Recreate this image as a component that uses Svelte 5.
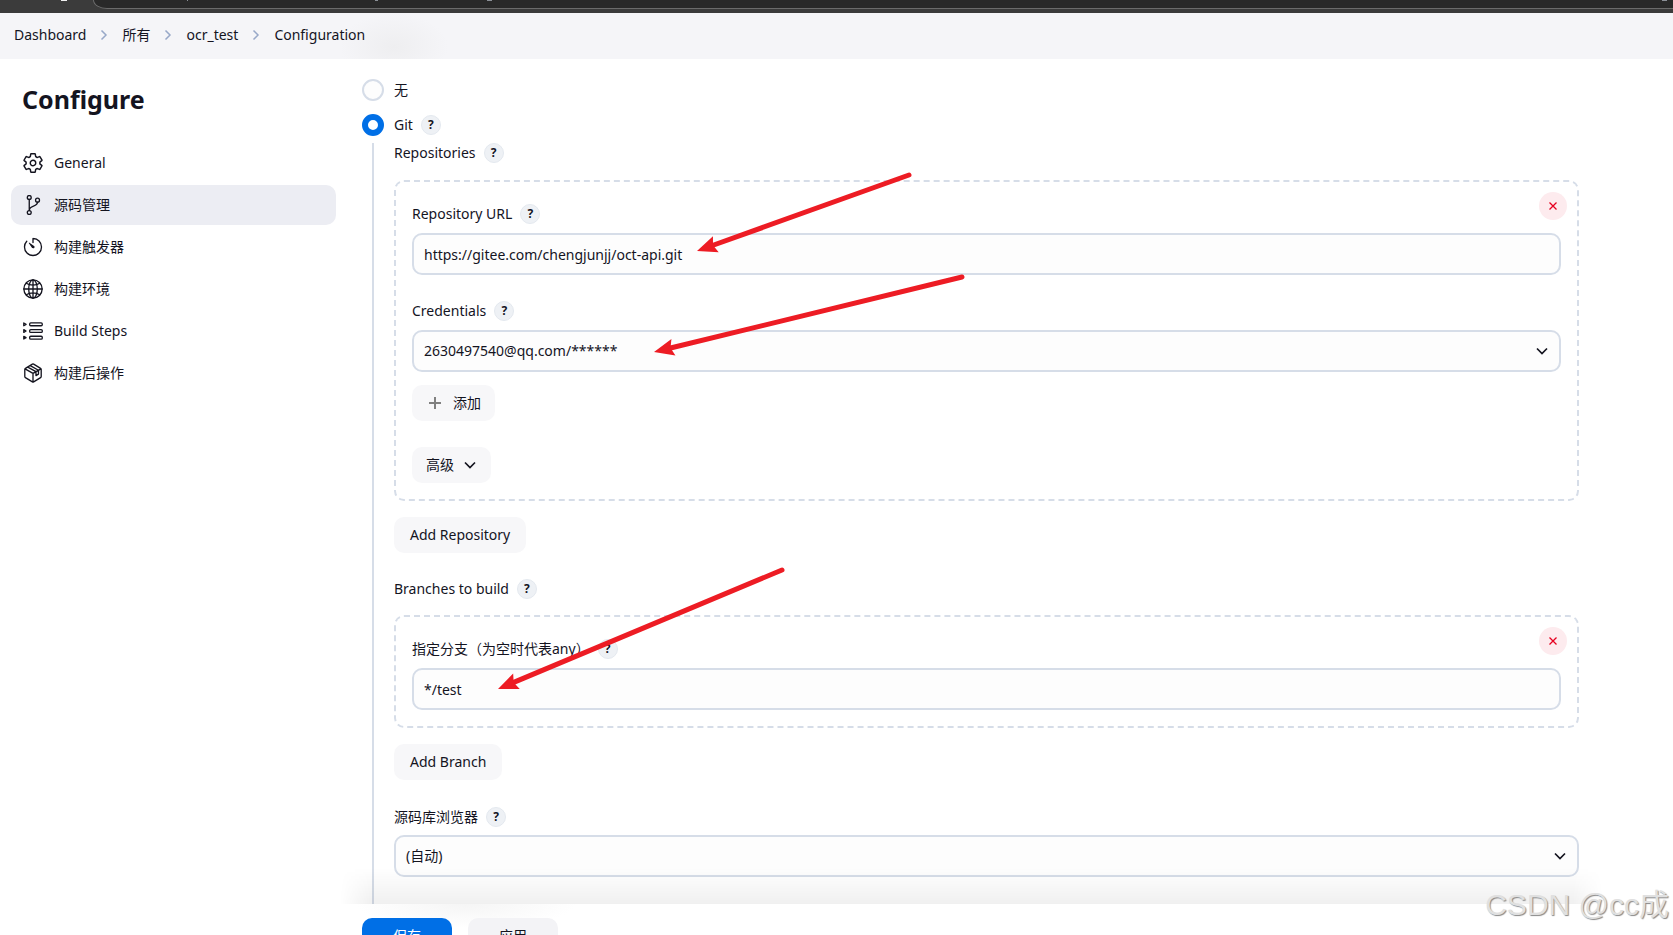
<script>
	let scm = $state('git')
	let repoUrl = $state('https://gitee.com/chengjunjj/oct-api.git')
	let credentials = $state('2630497540@qq.com/******')
	let branch = $state('*/test')
	let browser = $state('(自动)')
	let section = $state('scm')

	const crumbs = ['Dashboard', '所有', 'ocr_test', 'Configuration']

	const sections = [
		{id: 'general', label: 'General'},
		{id: 'scm', label: '源码管理'},
		{id: 'triggers', label: '构建触发器'},
		{id: 'environment', label: '构建环境'},
		{id: 'steps', label: 'Build Steps'},
		{id: 'post', label: '构建后操作'}
	]

	// from = tail, to = tip
	const arrows = [
		{from: [909, 175], to: [697, 251]},
		{from: [962, 277], to: [654, 352]},
		{from: [782, 570], to: [498, 689]}
	].map(({from, to}) => {
		const dx = from[0] - to[0]
		const dy = from[1] - to[1]
		return {
			x: to[0],
			y: to[1],
			length: Math.hypot(dx, dy),
			angle: Math.atan2(dy, dx) * 180 / Math.PI
		}
	})
</script>

{#snippet help(name)}
	<button type="button" class="help" aria-label={`Help for ${name}`}>?</button>
{/snippet}

{#snippet chevron()}
	<svg class="chevron" viewBox="0 0 14 14" aria-hidden="true"><path d="M2 4.5l5 5 5-5" /></svg>
{/snippet}

{#snippet remove()}
	<button type="button" class="remove" aria-label="Delete">
		<svg viewBox="0 0 10 10" aria-hidden="true"><path d="M1.5 1.5l7 7M8.5 1.5l-7 7" /></svg>
	</button>
{/snippet}

<div class="page">
	<div class="browser-bar">
		<div class="address"></div>
		<svg class="tab-text" aria-hidden="true">
			<path class="bright" d="M61 0h6" />
			<path d="M187 0h1M375 0h3M487 0h5M1662 0h5" />
		</svg>
	</div>

	<header>
		<nav class="crumbs" aria-label="Breadcrumb">
			{#each crumbs as crumb, i}
				{#if i > 0}
					<svg viewBox="0 0 8 12" aria-hidden="true"><path d="M1.5 1.5L6 6l-4.5 4.5" /></svg>
				{/if}
				<a href="#top">{crumb}</a>
			{/each}
		</nav>
	</header>

	<div class="body">
		<aside>
			<h1>Configure</h1>
			<nav class="tasks">
				{#each sections as item}
					<a href={`#${item.id}`} class:active={section === item.id} onclick={() => section = item.id}>
						<svg viewBox="0 0 512 512" aria-hidden="true">
							{#if item.id === 'general'}
								<g transform="translate(256 256) scale(1.1) translate(-256 -256)">
									<path d="M262.29 192.31a64 64 0 1057.4 57.4 64.13 64.13 0 00-57.4-57.4zM416.39 256a154.34 154.34 0 01-1.53 20.79l45.21 35.46a10.81 10.81 0 012.45 13.75l-42.77 74a10.81 10.81 0 01-13.14 4.59l-44.9-18.08a16.11 16.11 0 00-15.17 1.75A164.48 164.48 0 01325 400.8a15.94 15.94 0 00-8.82 12.14l-6.73 47.89a11.08 11.08 0 01-10.68 9.17h-85.54a11.11 11.11 0 01-10.69-8.87l-6.72-47.82a16.07 16.07 0 00-9-12.22 155.3 155.3 0 01-21.46-12.57 16 16 0 00-15.11-1.71l-44.89 18.07a10.81 10.81 0 01-13.14-4.58l-42.77-74a10.8 10.8 0 012.45-13.75l38.21-30a16.05 16.05 0 006-14.08c-.36-4.17-.58-8.33-.58-12.5s.21-8.27.58-12.35a16 16 0 00-6.07-13.94l-38.19-30A10.81 10.81 0 0149.48 186l42.77-74a10.81 10.81 0 0113.14-4.59l44.9 18.08a16.11 16.11 0 0015.17-1.75A164.48 164.48 0 01187 111.2a15.94 15.94 0 008.82-12.14l6.73-47.89A11.08 11.08 0 01213.23 42h85.54a11.11 11.11 0 0110.69 8.87l6.72 47.82a16.07 16.07 0 009 12.22 155.3 155.3 0 0121.46 12.57 16 16 0 0015.11 1.71l44.89-18.07a10.81 10.81 0 0113.14 4.58l42.77 74a10.8 10.8 0 01-2.45 13.75l-38.21 30a16.05 16.05 0 00-6.05 14.08c.33 4.14.55 8.3.55 12.47z" />
								</g>
							{:else if item.id === 'scm'}
								<circle cx="160" cy="64" r="50" />
								<circle cx="160" cy="448" r="50" />
								<circle cx="372" cy="132" r="50" />
								<path d="M160 398V114M372 182c0 136-212 68-212 216" />
							{:else if item.id === 'triggers'}
								<path d="M96 110A218 218 0 0038 256c0 120 98 218 218 218s218-98 218-218S378 40 262 38a5 5 0 00-6 5v97" />
								<path class="solid" d="M233.38 278.63l-84-118a12 12 0 0116-16l118 84a32.5 32.5 0 01-37.25 53.26 33.21 33.21 0 01-12.75-3.26z" />
							{:else if item.id === 'environment'}
								<circle cx="256" cy="256" r="234" />
								<ellipse cx="256" cy="256" rx="110" ry="234" />
								<path d="M256 22v468M22 256h468M84 108c46 30 108 48 172 48s126-18 172-48M84 404c46-30 108-48 172-48s126 18 172 48" />
							{:else if item.id === 'steps'}
								<rect x="170" y="50" width="324" height="72" rx="30" />
								<rect x="170" y="220" width="324" height="72" rx="30" />
								<rect x="170" y="390" width="324" height="72" rx="30" />
								<path d="M20 52l58 34-58 34zM20 222l58 34-58 34zM20 392l58 34-58 34z" />
							{:else}
								<path d="M466 346V166a32 32 0 00-16-28L272 28a32 32 0 00-32 0L62 138a32 32 0 00-16 28v180a32 32 0 0016 28l178 110a32 32 0 0032 0l178-110a32 32 0 0016-28zM52 149l204 117 204-117M256 486V266M122 104l210 118v100l64-38v-98L186 66" />
							{/if}
						</svg>
						{item.label}
					</a>
				{/each}
			</nav>
		</aside>

		<main>
			<form onsubmit={(e) => e.preventDefault()}>
				<div class="content">
					<div class="radio-row">
						<input type="radio" id="scm-none" value="none" bind:group={scm} />
						<label for="scm-none">无</label>
					</div>
					<div class="radio-row">
						<input type="radio" id="scm-git" value="git" bind:group={scm} />
						<label for="scm-git">Git</label>
						{@render help('Git')}
					</div>

					<div class="nested">
						<div class="label-row first">Repositories {@render help('Repositories')}</div>
						<section class="chunk">
							{@render remove()}
							<div class="label-row">
								<label for="repo-url">Repository URL</label>
								{@render help('Repository URL')}
							</div>
							<input type="text" id="repo-url" bind:value={repoUrl} />
							<div class="label-row second">
								<label for="credentials">Credentials</label>
								{@render help('Credentials')}
							</div>
							<div class="select">
								<select id="credentials" bind:value={credentials}>
									<option>2630497540@qq.com/******</option>
								</select>
								{@render chevron()}
							</div>
							<button type="button" class="btn add">
								<svg class="plus" viewBox="0 0 12 12" aria-hidden="true"><path d="M6 0v12M0 6h12" /></svg>
								添加
							</button>
							<button type="button" class="btn advanced">高级 {@render chevron()}</button>
						</section>
						<button type="button" class="btn">Add Repository</button>

						<div class="label-row group">Branches to build {@render help('Branches to build')}</div>
						<section class="chunk">
							{@render remove()}
							<div class="label-row">
								<label for="branch">指定分支（为空时代表any）</label>
								{@render help('指定分支')}
							</div>
							<input type="text" id="branch" bind:value={branch} />
						</section>
						<button type="button" class="btn">Add Branch</button>

						<div class="label-row viewer">
							<label for="browser">源码库浏览器</label>
							{@render help('源码库浏览器')}
						</div>
						<div class="select">
							<select id="browser" bind:value={browser}>
								<option>(自动)</option>
							</select>
							{@render chevron()}
						</div>
					</div>
					<div class="fade"></div>
				</div>

				<div class="bottom">
					<button type="submit" class="btn primary">保存</button>
					<button type="button" class="btn apply">应用</button>
				</div>
			</form>
		</main>
	</div>

	<svg class="arrows" aria-hidden="true">
		{#each arrows as arrow}
			<g transform={`translate(${arrow.x} ${arrow.y}) rotate(${arrow.angle})`}>
				<line x1="17" y1="0" x2={arrow.length} y2="0" />
				<path d="M0 0L20 -8.5L17 0L20 8.5Z" />
			</g>
		{/each}
	</svg>
	<div class="watermark">CSDN @cc成</div>
</div>

<style>
	:global(body) {
		background: #fff;
	}
	.page {
		position: relative;
		height: 100vh;
		overflow: hidden;
		color: #14141f;
		font-family: "Noto Sans", "Noto Sans CJK SC", sans-serif;
		font-size: 14px;
		line-height: 20px;
	}
	button, input, select {
		font: inherit;
		color: inherit;
		box-sizing: border-box;
		margin: 0;
	}
	a {
		color: inherit;
		text-decoration: none;
	}
	svg {
		fill: none;
		stroke: currentColor;
		flex: none;
	}

	.browser-bar {
		position: relative;
		height: 13px;
		padding-left: 93px;
		background: #3b3b3b;
	}
	.address {
		height: 8px;
		background: #292929;
		border: solid #6b6b6b;
		border-width: 0 0 1px 1px;
		border-bottom-left-radius: 14px 9px;
	}
	.tab-text {
		position: absolute;
		inset: 0;
		width: 100%;
		height: 100%;
		stroke: #8a8f96;
		stroke-width: 2;
	}
	.tab-text .bright {
		stroke: #f0f0f0;
	}
	header {
		height: 46px;
		background: radial-gradient(ellipse 54px 34px at 394px 34px, #eeeef0, #f5f5f8) #f5f5f8;
	}
	.crumbs {
		display: flex;
		align-items: center;
		height: 44px;
		padding-left: 14px;
		gap: 14px;
	}
	.crumbs svg {
		width: 8px;
		height: 12px;
		stroke: #98a8c8;
		stroke-width: 1.5;
	}

	.body {
		display: flex;
	}
	aside {
		width: 325px;
		padding: 24px 10px 0 11px;
		flex: none;
	}
	h1 {
		margin: 0 0 28px 11px;
		font-size: 25px;
		line-height: 32px;
	}
	.tasks {
		display: flex;
		flex-direction: column;
		gap: 2px;
	}
	.tasks a {
		display: flex;
		align-items: center;
		gap: 11px;
		height: 40px;
		padding-left: 12px;
		border-radius: 10px;
	}
	.tasks a.active {
		background: #ecedf3;
	}
	.tasks svg {
		width: 20px;
		height: 20px;
		stroke-width: 34;
		stroke-linejoin: round;
		stroke-linecap: round;
	}
	.tasks .solid {
		fill: currentColor;
		stroke: none;
	}

	main {
		flex: 1;
		min-width: 0;
	}
	.content {
		position: relative;
		padding: 19px 94px 0 16px;
	}
	.radio-row {
		display: flex;
		align-items: center;
		height: 24px;
		margin-bottom: 11px;
	}
	.radio-row label {
		margin: 0 8px 0 10px;
	}
	input[type="radio"] {
		appearance: none;
		width: 22px;
		height: 22px;
		border: 2px solid #d6dde8;
		border-radius: 50%;
		background: #fdfdfd;
	}
	input[type="radio"]:checked {
		border: 6px solid #006fe6;
		background: #fff;
	}
	.nested {
		margin: -5px 0 0 10px;
		padding: 0 0 27px 20px;
		border-left: 2px solid #d6dde8;
	}
	.label-row {
		display: flex;
		align-items: center;
		gap: 8px;
		height: 20px;
	}
	.first {
		margin-bottom: 17px;
	}
	.second {
		margin-top: 26px;
	}
	.group {
		margin: 26px 0 16px;
	}
	.viewer {
		margin: 27px 0 8px;
	}
	.help {
		width: 20px;
		height: 20px;
		padding: 0;
		border: 1px solid #e4e9ef;
		border-radius: 50%;
		background: #eef1f5;
		font-size: 12px;
		font-weight: 700;
		line-height: 18px;
	}
	.chunk {
		position: relative;
		margin-bottom: 16px;
		padding: 22px 16px 16px;
		border: 2px dashed #d6dde8;
		border-radius: 10px;
	}
	.chunk > input, .chunk > .select {
		margin-top: 9px;
	}
	input[type="text"], select {
		display: block;
		width: 100%;
		height: 42px;
		padding: 0 10px;
		border: 2px solid #d6dde8;
		border-radius: 10px;
		background: #fdfdfd;
	}
	.select {
		position: relative;
	}
	select {
		appearance: none;
	}
	.chevron {
		width: 14px;
		height: 14px;
		stroke-width: 1.7;
	}
	.select .chevron {
		position: absolute;
		right: 12px;
		top: 14px;
		pointer-events: none;
	}
	.remove {
		position: absolute;
		top: 10px;
		right: 10px;
		display: flex;
		align-items: center;
		justify-content: center;
		width: 28px;
		height: 28px;
		padding: 0;
		border: 0;
		border-radius: 50%;
		background: #fdebee;
		color: #e6001f;
	}
	.remove svg {
		width: 10px;
		height: 10px;
		stroke-width: 1.3;
	}
	.btn {
		display: flex;
		align-items: center;
		justify-content: center;
		height: 36px;
		padding: 0 16px;
		border: 0;
		border-radius: 10px;
		background: #f7f7f9;
	}
	.add {
		margin-top: 13px;
		padding: 0 14px 0 17px;
		gap: 12px;
	}
	.plus {
		width: 12px;
		height: 12px;
		stroke: #808080;
		stroke-width: 2;
	}
	.advanced {
		margin-top: 26px;
		padding: 0 14px;
		gap: 9px;
	}
	.fade {
		position: absolute;
		left: -6px;
		right: 70px;
		bottom: 0;
		height: 36px;
		background: linear-gradient(rgba(0, 0, 0, 0), rgba(0, 0, 0, 0.06));
		mask-image: linear-gradient(90deg, transparent, #000 30px, #000 calc(100% - 30px), transparent);
		pointer-events: none;
	}
	.bottom {
		display: flex;
		gap: 16px;
		padding: 14px 16px;
		background: radial-gradient(ellipse 110px 24px at 120px 0, #f5f5f5, #fff);
	}
	.bottom .btn {
		width: 90px;
	}
	.btn.primary {
		background: #006fe6;
		color: #fff;
	}
	.btn.apply {
		background: #f3f3f6;
	}

	.arrows {
		position: absolute;
		inset: 0;
		width: 100%;
		height: 100%;
		pointer-events: none;
		stroke: none;
		fill: #ed1c24;
	}
	.arrows line {
		stroke: #ed1c24;
		stroke-width: 5;
		stroke-linecap: round;
	}
	.watermark {
		position: absolute;
		right: 4px;
		bottom: 10px;
		font-family: "Liberation Sans", "Noto Sans CJK SC", sans-serif;
		font-size: 30px;
		line-height: 40px;
		color: #e0e0e0;
		text-shadow: 1px 1px 1px #888;
		pointer-events: none;
	}
</style>
